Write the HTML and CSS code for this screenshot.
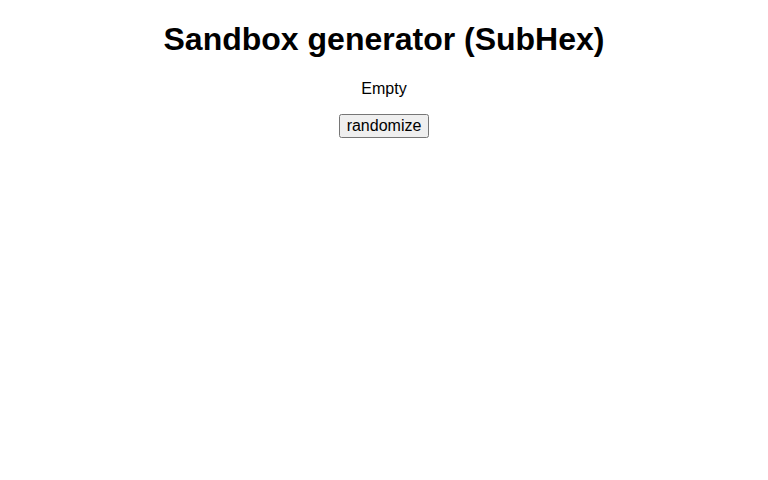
FILE: index.html
```html
<!DOCTYPE html>
<html lang="en">
<head>
  <meta charset="UTF-8" />
  <title>Sandbox generator (SubHex)</title>
  <link rel="stylesheet" href="styles.css">
</head>
<body>
  <h1>Sandbox generator (SubHex)</h1>
  <p id="status">Empty</p>
  <button type="button" class="btn-randomize">randomize</button>
</body>
</html>
```

FILE: styles.css
```css
body {
  font-family: "Liberation Sans", Arial, sans-serif;
  margin: 0;
  text-align: center;
}

h1 {
  font-size: 32px;
}

.btn-randomize {
  font-family: "Liberation Sans", Arial, sans-serif;
  font-size: 16px;
}
```
